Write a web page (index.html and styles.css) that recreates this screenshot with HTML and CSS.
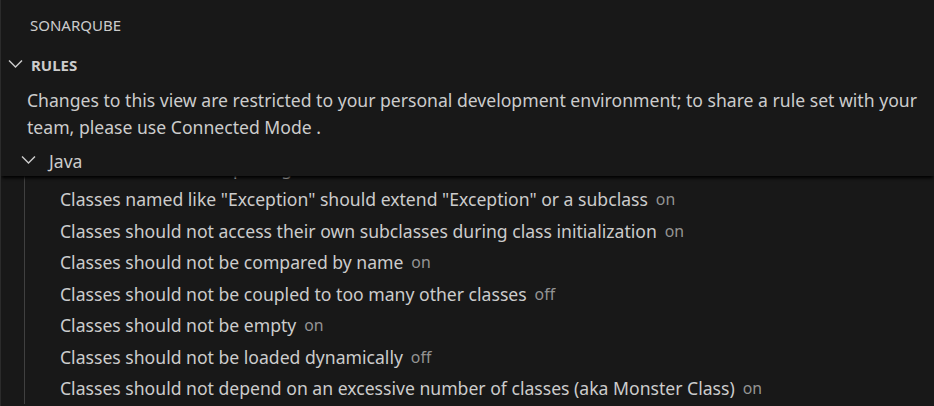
FILE: index.html
```html
<!DOCTYPE html>
<html lang="en">
<head>
<meta charset="utf-8">
<title>SonarQube Rules</title>
<link rel="stylesheet" href="styles.css">
</head>
<body>
<div class="sidebar">
  <div class="title">SONARQUBE</div>
  <div class="section-header">
    <svg class="chev" viewBox="0 0 16 16"><path d="M3.147 5.646l.707-.707L8 9.086l4.146-4.147.707.707L8 10.5 3.147 5.646z"/></svg>
    <span class="section-name">RULES</span>
  </div>
  <div class="welcome">Changes to this view are restricted to your personal development environment; to share a rule set with your team, please use Connected Mode .</div>
  <div class="tree">
    <div class="sticky">
      <svg class="chev" viewBox="0 0 16 16"><path d="M3.147 5.646l.707-.707L8 9.086l4.146-4.147.707.707L8 10.5 3.147 5.646z"/></svg>
      <span class="lang">Java</span>
    </div>
    <div class="rows">
      <div class="row"><span class="guide"></span><span class="label">Classes from "sun.*" packages should not be used</span><span class="desc">on</span></div>
      <div class="row"><span class="guide"></span><span class="label">Classes named like "Exception" should extend "Exception" or a subclass</span><span class="desc">on</span></div>
      <div class="row"><span class="guide"></span><span class="label">Classes should not access their own subclasses during class initialization</span><span class="desc">on</span></div>
      <div class="row"><span class="guide"></span><span class="label">Classes should not be compared by name</span><span class="desc">on</span></div>
      <div class="row"><span class="guide"></span><span class="label">Classes should not be coupled to too many other classes</span><span class="desc">off</span></div>
      <div class="row"><span class="guide"></span><span class="label">Classes should not be empty</span><span class="desc">on</span></div>
      <div class="row"><span class="guide"></span><span class="label">Classes should not be loaded dynamically</span><span class="desc">off</span></div>
      <div class="row"><span class="guide"></span><span class="label">Classes should not depend on an excessive number of classes (aka Monster Class)</span><span class="desc">on</span></div>
    </div>
  </div>
</div>
</body>
</html>
```

FILE: styles.css
```css
html, body {
  margin: 0;
  padding: 0;
  height: 100%;
  background: #181818;
  overflow: hidden;
}

.sidebar {
  height: 100%;
  border-left: 1px solid #2b2b2b;
  box-sizing: border-box;
  color: #cccccc;
  font-family: "Noto Sans", "Open Sans", sans-serif;
  display: flex;
  flex-direction: column;
}

.title {
  height: 49px;
  flex: none;
  display: flex;
  align-items: center;
  padding-left: 29px;
  font-size: 15px;
}

.section-header {
  height: 31px;
  flex: none;
  display: flex;
  align-items: center;
  padding-left: 3px;
}

.chev {
  width: 23px;
  height: 23px;
  fill: #cccccc;
  flex: none;
}

.section-name {
  font-weight: 700;
  font-size: 15px;
  margin-left: 4px;
}

.welcome {
  flex: none;
  padding: 7px 8px 0 26px;
  font-size: 17.6px;
  line-height: 27px;
  height: 58px;
}

.tree {
  position: relative;
  flex: 1;
  overflow: hidden;
}

.sticky {
  position: absolute;
  top: 0;
  left: 0;
  right: 0;
  height: 31px;
  display: flex;
  align-items: center;
  padding-left: 16px;
  background: #181818;
  box-shadow: 0 3px 3px -1px #000000;
  z-index: 2;
}

.lang {
  font-size: 17.6px;
  margin-left: 9px;
}

.rows {
  padding-top: 7px;
}

.row {
  height: 31.5px;
  display: flex;
  align-items: center;
  padding-left: 23px;
  font-size: 17.6px;
  white-space: nowrap;
}

.guide {
  align-self: stretch;
  width: 36px;
  flex: none;
  border-left: 1px solid #404040;
  box-sizing: border-box;
}

.desc {
  font-size: 0.9em;
  margin-left: 0.5em;
  color: rgba(204, 204, 204, 0.7);
}
```
